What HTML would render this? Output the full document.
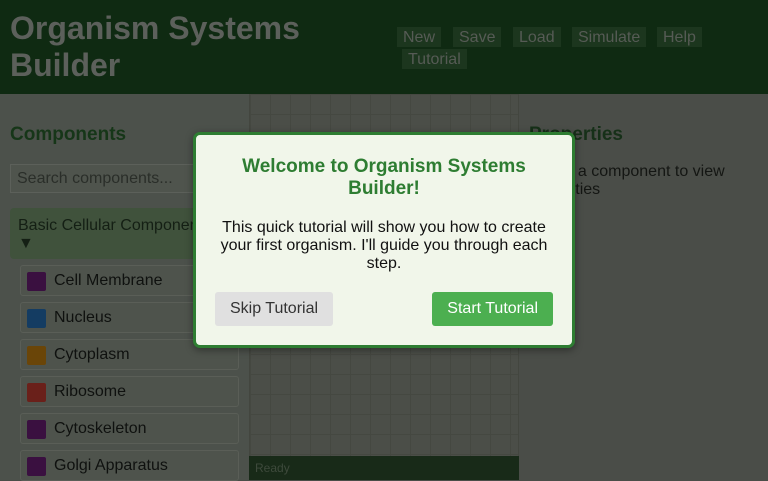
<!DOCTYPE html>
<html><head><style>
*{box-sizing:border-box;margin:0;padding:0}
body{width:768px;height:480px;overflow:hidden;font-family:"Liberation Sans",sans-serif;background:#4a4d48;position:relative}
.hdr{position:absolute;left:0;top:0;width:768px;height:94px;background:#0f2a12}
.hdr h1{position:absolute;left:10px;top:10px;font-size:32px;line-height:37px;color:#5c605b;font-weight:bold;width:320px}
.nav{position:absolute;top:27px;font-size:16px;color:#565b55;background:#1c361e;height:20px;line-height:21px;padding:0 6px}
.left{position:absolute;left:0;top:94px;width:249px;height:386px;background:#4c514b}
.left h2{position:absolute;left:10px;top:30px;font-size:19px;color:#163618}
.search{position:absolute;left:10px;top:70px;width:200px;height:29px;border:1px solid #5c605a;background:#4f544d;color:#2a2e29;font-size:16px;padding:5px 6px}
.cat{position:absolute;left:10px;top:114px;width:240px;height:51px;background:#40523c;border-radius:4px;font-size:16px;color:#141f14;padding:9px 8px;line-height:18px}
.item{position:absolute;left:20px;width:219px;height:31px;border:1px solid #5a5e57;border-radius:3px;background:#4e534c;font-size:16px;color:#0f110f;line-height:30px;padding-left:33px}
.item i{position:absolute;left:6px;top:6px;width:19px;height:19px;border-radius:2px}
.canvas{position:absolute;left:249px;top:94px;width:270px;height:386px;background-color:#4b4e48;background-image:linear-gradient(#454841 1px,transparent 1px),linear-gradient(90deg,#454841 1px,transparent 1px);background-size:20px 20px;border-left:1px solid #43463f;border-right:1px solid #43463f}
.status{position:absolute;left:249px;top:456px;width:270px;height:24px;background:#182a18;color:#3e4a3c;font-size:12px;padding:5px 6px}
.props h2{position:absolute;left:529px;top:124px;font-size:19px;color:#163018}
.props p{position:absolute;left:529px;top:163px;font-size:16px;color:#141613;width:220px;line-height:18px}
.modal{position:absolute;left:193px;top:132px;width:382px;height:216px;background:#f1f6ea;border:3px solid #2e7d32;border-radius:7px;box-shadow:0 2px 8px rgba(0,0,0,.4);text-align:center}
.modal h3{font-size:19px;color:#2e7d32;line-height:22px;margin:21px 30px 0}
.modal p{font-size:16px;color:#111;line-height:18px;margin:19px 22px 0}
.btn{position:absolute;top:157px;height:34px;line-height:34px;font-size:16px;border-radius:3px;padding:0 15px}
</style></head><body>
<div class="hdr"><h1>Organism Systems Builder</h1>
<span class="nav" style="left:397px">New</span><span class="nav" style="left:453px">Save</span><span class="nav" style="left:513px">Load</span><span class="nav" style="left:572px">Simulate</span><span class="nav" style="left:657px">Help</span><span class="nav" style="left:402px;top:49px">Tutorial</span></div>
<div class="left"><h2>Components</h2><div class="search">Search components...</div>
<div class="cat">Basic Cellular Components<br>▼</div>
<div class="item" style="top:171px"><i style="background:#3a1040"></i>Cell Membrane</div>
<div class="item" style="top:208px"><i style="background:#143c62"></i>Nucleus</div>
<div class="item" style="top:245px"><i style="background:#6a4508"></i>Cytoplasm</div>
<div class="item" style="top:282px"><i style="background:#6a201a"></i>Ribosome</div>
<div class="item" style="top:319px"><i style="background:#3a1040"></i>Cytoskeleton</div>
<div class="item" style="top:356px"><i style="background:#3a1040"></i>Golgi Apparatus</div>
</div>
<div class="canvas"></div><div class="status">Ready</div>
<div class="props"><h2>Properties</h2><p>Select a component to view properties</p></div>
<div class="modal"><h3>Welcome to Organism Systems Builder!</h3>
<p>This quick tutorial will show you how to create your first organism. I'll guide you through each step.</p>
<div class="btn" style="left:19px;background:#e0e0e0;color:#333">Skip Tutorial</div>
<div class="btn" style="right:19px;background:#4caf50;color:#fff">Start Tutorial</div></div>
</body></html>
